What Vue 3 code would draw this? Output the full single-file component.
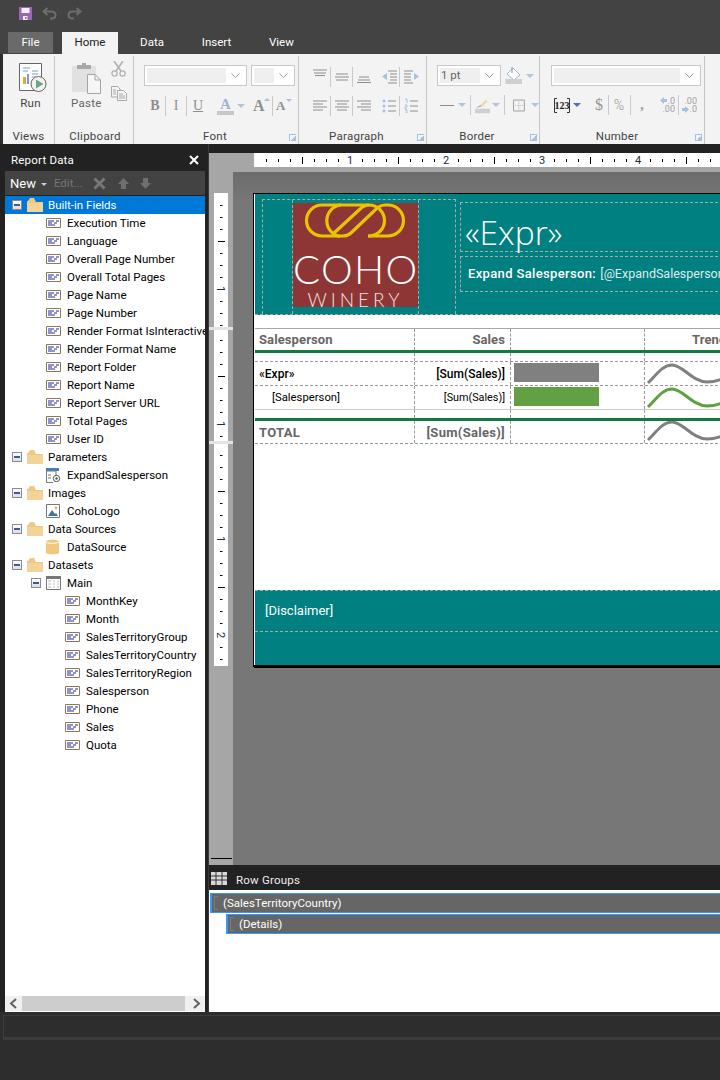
<script setup>
const tree = [
  { label: 'Built-in Fields', level: 0, icon: 'folder', selected: true },
  { label: 'Execution Time', level: 1, icon: 'field' },
  { label: 'Language', level: 1, icon: 'field' },
  { label: 'Overall Page Number', level: 1, icon: 'field' },
  { label: 'Overall Total Pages', level: 1, icon: 'field' },
  { label: 'Page Name', level: 1, icon: 'field' },
  { label: 'Page Number', level: 1, icon: 'field' },
  { label: 'Render Format IsInteractive', level: 1, icon: 'field' },
  { label: 'Render Format Name', level: 1, icon: 'field' },
  { label: 'Report Folder', level: 1, icon: 'field' },
  { label: 'Report Name', level: 1, icon: 'field' },
  { label: 'Report Server URL', level: 1, icon: 'field' },
  { label: 'Total Pages', level: 1, icon: 'field' },
  { label: 'User ID', level: 1, icon: 'field' },
  { label: 'Parameters', level: 0, icon: 'folder' },
  { label: 'ExpandSalesperson', level: 1, icon: 'param' },
  { label: 'Images', level: 0, icon: 'folder' },
  { label: 'CohoLogo', level: 1, icon: 'image' },
  { label: 'Data Sources', level: 0, icon: 'folder' },
  { label: 'DataSource', level: 1, icon: 'db' },
  { label: 'Datasets', level: 0, icon: 'folder' },
  { label: 'Main', level: 1, icon: 'table', expander: true },
  { label: 'MonthKey', level: 2, icon: 'field' },
  { label: 'Month', level: 2, icon: 'field' },
  { label: 'SalesTerritoryGroup', level: 2, icon: 'field' },
  { label: 'SalesTerritoryCountry', level: 2, icon: 'field' },
  { label: 'SalesTerritoryRegion', level: 2, icon: 'field' },
  { label: 'Salesperson', level: 2, icon: 'field' },
  { label: 'Phone', level: 2, icon: 'field' },
  { label: 'Sales', level: 2, icon: 'field' },
  { label: 'Quota', level: 2, icon: 'field' }
]

// horizontal ruler: a tick every 12px, 8 ticks to the inch
const hTicks = []
for (let i = 1; i < 40; i++) hTicks.push(i * 12)

// vertical ruler has one block per report section
const vSections = [
  { top: 0, count: 11 },
  { top: 135, count: 9 },
  { top: 250, count: 18 }
]
const vTicks = []
for (const s of vSections) {
  for (let i = 1; i <= s.count; i++) {
    vTicks.push({ y: s.top + i * 12, kind: i % 8 === 0 ? 'num' : i % 4 === 0 ? 'long' : 'short', n: i / 8 })
  }
}

const lines = (rows) => rows.map(([a, b, y]) => `M${a} ${y}H${b}`).join('')
const paraTop = [
  lines([[0, 14, 1], [1, 13, 4], [2, 12, 6.5]]),
  lines([[1, 13, 5], [0, 14, 8], [1, 13, 11]]),
  lines([[2, 12, 8], [1, 13, 11], [0, 14, 13.5]])
]
const paraBottom = [
  lines([[0, 14, 3], [0, 10, 6], [0, 14, 9], [0, 10, 12]]),
  lines([[0, 14, 3], [2, 12, 6], [0, 14, 9], [2, 12, 12]]),
  lines([[0, 14, 3], [4, 14, 6], [0, 14, 9], [4, 14, 12]])
]
const spark = 'M1 21C10 12 16 3 25 3C36 3 44 19 60 20C66 20 70 19 75 17'
</script>

<template>
  <div class="app">
    <div class="titlebar">
      <svg class="save" width="13" height="13" viewBox="0 0 13 13"><path d="M0 0H13V13H0Z" fill="#9a66b8"/><path d="M2.5 1H10.5V6H2.5Z" fill="#f4eef8"/><path d="M4 9H8.5V13H4Z" fill="#f4eef8"/><path d="M6 10H7.5V12H6Z" fill="#9a66b8"/></svg>
      <svg class="qat" width="15" height="13" viewBox="0 0 15 13"><path d="M5.5 1L1.5 4.5L5.5 8M2 4.5H9.5C12 4.5 13.5 6 13.5 8C13.5 10 12 11.5 9.5 11.5H8" fill="none" stroke="#6d6d6d" stroke-width="2"/></svg>
      <svg class="qat" width="15" height="13" viewBox="0 0 15 13"><path d="M9.5 1L13.5 4.5L9.5 8M13 4.5H5.5C3 4.5 1.5 6 1.5 8C1.5 10 3 11.5 5.5 11.5H7" fill="none" stroke="#6d6d6d" stroke-width="2"/></svg>
    </div>

    <div class="tabs">
      <a class="tab file">File</a>
      <a class="tab home">Home</a>
      <a class="tab data">Data</a>
      <a class="tab insert">Insert</a>
      <a class="tab view">View</a>
    </div>

    <div class="ribbon">
      <section class="group views">
        <div class="group-body big">
          <svg width="29" height="30" viewBox="0 0 29 30">
            <path d="M.5 .5H22.5V27.5H.5Z" fill="#fff" stroke="#666"/>
            <path d="M4 5H11M4 8H9M13 8H19M13 11H19M13 14H17" stroke="#7a9cc6" stroke-width="1" fill="none"/>
            <path d="M4 14H7V21H4Z" fill="#e0a93c"/><path d="M8 11H10V21H8Z" fill="#7a9cc6"/>
            <circle cx="19.5" cy="21" r="7.5" fill="#f3f3f3" stroke="#666"/>
            <path d="M17 16.5L24.5 21L17 25.5Z" fill="#6da387"/>
          </svg>
          <span class="big-label dark">Run</span>
        </div>
        <div class="group-label">Views</div>
      </section>

      <section class="group clipboard">
        <div class="group-body clip-row">
          <div class="big">
            <svg width="29" height="31" viewBox="0 0 29 31">
              <path d="M0 3H24V29H0Z" fill="#e1e1e1"/>
              <path d="M5 2H10V0H14V2H19V6H5Z" fill="#a8a8a8"/>
              <path d="M15.5 11.5H23L28.5 17V30.5H15.5Z" fill="#f6f6f6" stroke="#a4a4a4"/>
              <path d="M23 11.5V17H28.5" fill="none" stroke="#a4a4a4"/>
            </svg>
            <span class="big-label">Paste</span>
          </div>
          <div class="clip-small">
            <svg width="15" height="16" viewBox="0 0 15 16"><path d="M3 0L10 10M12 0L5 10" stroke="#b0b0b0" stroke-width="1.6" fill="none"/><circle cx="3.5" cy="12.5" r="2.6" fill="none" stroke="#b0b0b0" stroke-width="1.2"/><circle cx="11.5" cy="12.5" r="2.6" fill="none" stroke="#b0b0b0" stroke-width="1.2"/></svg>
            <svg width="16" height="15" viewBox="0 0 16 15"><path d="M.5 .5H6.5L9 3V11H.5Z" fill="#f4f4f4" stroke="#aaa"/><path d="M6.5 4.5H12.5L15.5 7.5V14.5H6.5Z" fill="#f4f4f4" stroke="#aaa"/><path d="M2 4H5M2 6H5M2 8H5M8 8H12M8 10H14M8 12H14" stroke="#aaa"/></svg>
          </div>
        </div>
        <div class="group-label">Clipboard</div>
      </section>

      <section class="group font">
        <div class="group-body">
          <div class="combo-row">
            <div class="combo w-font"><span class="combo-fill"></span><svg class="chev" width="9" height="5" viewBox="0 0 9 5"><path d="M.5 .5L4.5 4.5L8.5 .5" fill="none" stroke="#9a9a9a"/></svg></div>
            <div class="combo w-size"><span class="combo-fill"></span><svg class="chev" width="9" height="5" viewBox="0 0 9 5"><path d="M.5 .5L4.5 4.5L8.5 .5" fill="none" stroke="#9a9a9a"/></svg></div>
          </div>
          <div class="font-row">
            <b class="glyph bold">B</b><i class="sep"></i>
            <i class="glyph italic">I</i><i class="sep"></i>
            <u class="glyph under">U</u>
            <span class="color-a">A</span><i class="arrow"></i>
            <span class="grow-a">A<i class="up"></i></span><i class="sep"></i>
            <span class="shrink-a">A<i class="down"></i></span>
          </div>
        </div>
        <div class="group-label">Font</div>
        <i class="launcher"></i>
      </section>

      <section class="group paragraph">
        <div class="group-body para">
          <div class="para-row">
            <template v-for="(d, i) in paraTop" :key="d">
              <svg width="15" height="15" viewBox="0 0 15 15"><path :d="d" stroke="#8e8e8e" fill="none"/></svg>
              <i v-if="i < 2" class="sep"></i>
            </template>
            <svg class="after-align" width="15" height="15" viewBox="0 0 15 15"><path d="M6 2H15M8 5H15M8 8H15M8 11H15M6 14H15" stroke="#8e8e8e"/><path d="M5 4V11L0 7.5Z" fill="#a9bfe0"/></svg>
            <i class="sep"></i>
            <svg width="15" height="15" viewBox="0 0 15 15"><path d="M0 2H9M0 5H7M0 8H7M0 11H7M0 14H9" stroke="#8e8e8e"/><path d="M10 4V11L15 7.5Z" fill="#a9bfe0"/></svg>
          </div>
          <div class="para-row">
            <template v-for="(d, i) in paraBottom" :key="d">
              <svg width="15" height="15" viewBox="0 0 15 15"><path :d="d" stroke="#8e8e8e" fill="none"/></svg>
              <i v-if="i < 2" class="sep"></i>
            </template>
            <svg class="after-align" width="15" height="15" viewBox="0 0 15 15"><circle cx="2" cy="3" r="1.5" fill="#a9bfe0"/><circle cx="2" cy="8" r="1.5" fill="#a9bfe0"/><circle cx="2" cy="13" r="1.5" fill="#a9bfe0"/><path d="M6 3H14M6 8H14M6 13H14" stroke="#8e8e8e"/></svg>
            <i class="sep"></i>
            <svg width="15" height="15" viewBox="0 0 15 15"><path d="M1 1H3V5M1 7H3V9H1V11H3M1 12H3V15H1" stroke="#a9bfe0" fill="none"/><path d="M6 3H14M6 8H14M6 13H14" stroke="#8e8e8e"/></svg>
          </div>
        </div>
        <div class="group-label">Paragraph</div>
        <i class="launcher"></i>
      </section>

      <section class="group border">
        <div class="group-body">
          <div class="combo-row">
            <div class="combo w-pt"><span class="combo-fill pt">1 pt</span><svg class="chev" width="9" height="5" viewBox="0 0 9 5"><path d="M.5 .5L4.5 4.5L8.5 .5" fill="none" stroke="#9a9a9a"/></svg></div>
            <svg class="bucket" width="17" height="17" viewBox="0 0 17 17"><path d="M2 7L8 1L15 8L9 13Z" fill="#fff" stroke="#9fb6d8"/><path d="M7 0V6" stroke="#8e8e8e"/><path d="M.5 12H17V17H.5Z" fill="#cfcfcf"/></svg>
            <i class="arrow"></i>
          </div>
          <div class="border-row">
            <span class="line-sample"></span><i class="arrow"></i><i class="sep"></i>
            <svg class="pen" width="17" height="17" viewBox="0 0 17 17"><path d="M5 9L12 2L14 4L8 10Z" fill="#f0d9a0"/><path d="M1 11L6 8L7 10Z" fill="#8fb0dc"/><path d="M0 12H17V17H0Z" fill="#cfcfcf"/></svg>
            <i class="arrow"></i><i class="sep"></i>
            <svg class="box" width="13" height="13" viewBox="0 0 13 13"><path d="M.5 .5H12.5V12.5H.5Z" fill="none" stroke="#9a9a9a"/><path d="M6.5 2V11M2 6.5H11" stroke="#b8b8b8" stroke-dasharray="1 1"/></svg>
            <i class="arrow"></i>
          </div>
        </div>
        <div class="group-label">Border</div>
        <i class="launcher"></i>
      </section>

      <section class="group number">
        <div class="group-body">
          <div class="combo-row">
            <div class="combo w-num"><span class="combo-fill"></span><svg class="chev" width="9" height="5" viewBox="0 0 9 5"><path d="M.5 .5L4.5 4.5L8.5 .5" fill="none" stroke="#9a9a9a"/></svg></div>
          </div>
          <div class="num-row">
            <svg class="n123" width="16" height="15" viewBox="0 0 16 15"><path d="M3 .5H.5V14.5H3M13 .5H15.5V14.5H13" fill="none" stroke="#333"/><text x="8" y="11" text-anchor="middle" class="n123-text">123</text></svg>
            <i class="arrow blue"></i>
            <span class="glyph dollar">$</span><i class="sep"></i>
            <span class="glyph pct">%</span><i class="sep"></i>
            <span class="glyph comma">,</span>
            <svg class="dec d1" width="15" height="16" viewBox="0 0 15 16"><path d="M0 3.5L4 0V2H7V5H4V7Z" fill="#a9bfe0"/><text x="15" y="7" text-anchor="end" class="dec-text">.0</text><text x="15" y="15" text-anchor="end" class="dec-text">.00</text></svg>
            <i class="sep"></i>
            <svg class="dec d2" width="15" height="16" viewBox="0 0 15 16"><path d="M7 12.5L3 9V11H0V14H3V16Z" fill="#a9bfe0"/><text x="15" y="7" text-anchor="end" class="dec-text">.00</text><text x="15" y="15" text-anchor="end" class="dec-text">.0</text></svg>
          </div>
        </div>
        <div class="group-label">Number</div>
        <i class="launcher"></i>
      </section>
    </div>

    <div class="body">
      <aside class="panel">
        <div class="panel-head"><span>Report Data</span>
          <svg width="10" height="10" viewBox="0 0 10 10"><path d="M1 1L9 9M9 1L1 9" stroke="#fff" stroke-width="2"/></svg>
        </div>
        <div class="panel-tools">
          <span class="new">New</span><i class="new-arrow"></i>
          <span class="edit">Edit...</span>
          <svg width="13" height="13" viewBox="0 0 13 13"><path d="M1.5 1.5L11.5 11.5M11.5 1.5L1.5 11.5" stroke="#777" stroke-width="3"/></svg>
          <svg width="11" height="11" viewBox="0 0 11 11"><path d="M5.5 0L11 6H8V11H3V6H0Z" fill="#6f6f6f"/></svg>
          <svg width="11" height="11" viewBox="0 0 11 11"><path d="M5.5 11L11 5H8V0H3V5H0Z" fill="#6f6f6f"/></svg>
        </div>
        <div class="tree">
          <div v-for="node in tree" :key="node.label" class="node" :class="['lv' + node.level, { selected: node.selected }]">
            <span v-if="node.level === 0 || node.expander" class="expander"><i></i></span>
            <svg v-if="node.icon === 'folder'" class="ico" width="16" height="14" viewBox="0 0 16 14"><path d="M0 3V14H16V4H9L7 0H3L1 3Z" fill="#efc983"/><path d="M0 5H16V14H0Z" fill="#f3d397"/></svg>
            <svg v-else-if="node.icon === 'field'" class="ico" width="15" height="10" viewBox="0 0 15 10"><path d="M.5 .5H14.5V9.5H.5Z" fill="#fff" stroke="#8a7a5c"/><path d="M2 3H8M10 3H13M2 5H6M8 5H11M2 7H9" stroke="#24249a"/></svg>
            <svg v-else-if="node.icon === 'param'" class="ico" width="15" height="15" viewBox="0 0 15 15"><path d="M.5 3H10V8M.5 3V14.5H7" fill="#fff" stroke="#777"/><path d="M0 0H13V3H0Z" fill="#4d7fb5"/><path d="M2 7H5M2 10H5" stroke="#777"/><circle cx="10.5" cy="10.5" r="3.2" fill="none" stroke="#555"/><circle cx="10.5" cy="10.5" r="1.2" fill="#555"/></svg>
            <svg v-else-if="node.icon === 'image'" class="ico" width="14" height="14" viewBox="0 0 14 14"><path d="M.5 .5H13.5V13.5H.5Z" fill="#fff" stroke="#777"/><path d="M2 12L6 6L9 10L10 9L12 12Z" fill="#3f73ad"/><circle cx="10" cy="4" r="1.4" fill="#e9b45a"/></svg>
            <svg v-else-if="node.icon === 'db'" class="ico" width="13" height="16" viewBox="0 0 13 16"><path d="M0 2.5C0 0 13 0 13 2.5V13.5C13 16 0 16 0 13.5Z" fill="#f0c97c"/><path d="M0 2.5C0 5 13 5 13 2.5" fill="none" stroke="#fff"/></svg>
            <svg v-else class="ico" width="15" height="14" viewBox="0 0 15 14"><path d="M.5 .5H14.5V13.5H.5Z" fill="#fff" stroke="#777"/><path d="M0 0H15V3H0Z" fill="#777"/><path d="M2 5H5M7 5H9M11 5H13M2 8H5M7 8H9M11 8H13M2 11H5M7 11H9M11 11H13" stroke="#bbb"/></svg>
            <span class="node-text">{{ node.label }}</span>
          </div>
        </div>
        <div class="hscroll">
          <svg width="17" height="15" viewBox="0 0 17 15"><path d="M11 3L6 7.5L11 12" fill="none" stroke="#606060" stroke-width="2"/></svg>
          <div class="thumb"></div>
          <svg width="20" height="15" viewBox="0 0 20 15"><path d="M9 3L14 7.5L9 12" fill="none" stroke="#606060" stroke-width="2"/></svg>
        </div>
      </aside>

      <main class="designer">
        <div class="hruler-row">
          <svg class="hruler" width="466" height="14" viewBox="0 0 466 14">
            <template v-for="x in hTicks" :key="x">
              <text v-if="x % 96 === 0" :x="x" y="11" text-anchor="middle" class="ruler-num">{{ x / 96 }}</text>
              <path v-else-if="x % 48 === 0" :d="`M${x + .5} 4V11`" stroke="#000"/>
              <path v-else :d="`M${x + .5} 6V9`" stroke="#000"/>
            </template>
          </svg>
        </div>
        <div class="design-body">
          <div class="vruler-col">
            <svg class="vruler" width="24" height="473" viewBox="0 0 24 473">
              <rect x="5" y="0" width="14" height="473" fill="#fff"/>
              <rect x="0" y="134" width="24" height="3" fill="#e4e4e4"/>
              <rect x="0" y="248" width="24" height="3" fill="#e4e4e4"/>
              <template v-for="t in vTicks" :key="t.y">
                <text v-if="t.kind === 'num'" class="ruler-num" text-anchor="middle" :transform="`translate(8 ${t.y}) rotate(90)`">{{ t.n }}</text>
                <path v-else-if="t.kind === 'long'" :d="`M9 ${t.y + .5}H16`" stroke="#000"/>
                <path v-else :d="`M11 ${t.y + .5}H13.5`" stroke="#000"/>
              </template>
            </svg>
            <i class="corner-line"></i>
          </div>
          <div class="canvas">
            <div class="page">
              <header class="rpt-header">
                <div class="logo-box">
                  <div class="logo-col">
                    <div class="logo">
                      <svg width="126" height="36" viewBox="0 0 126 36">
                        <g fill="none" stroke="#e9c400" stroke-width="3.2">
                          <path d="M48 2H29A15.5 15.5 0 0 0 29 33H50C54 33 57 31 59 29L80 9C83 6 86 2 92 2H95A15.5 15.5 0 0 1 95 33H75"/>
                          <path d="M47 33.5A16 16 0 0 1 47 2H76A15.5 15.5 0 0 1 76 33H75"/>
                          <path d="M41 30L66 7C69 4 72 2 76 2"/>
                        </g>
                      </svg>
                      <div class="coho">COHO</div>
                      <div class="winery">WINERY</div>
                    </div>
                  </div>
                </div>
                <div class="title-col">
                  <div class="expr-box">«Expr»</div>
                  <div class="expand-box"><b>Expand Salesperson:</b> <span>[@ExpandSalesperson]</span></div>
                </div>
              </header>

              <div class="tbl">
                <div class="tr head">
                  <div class="td">Salesperson</div><div class="td right">Sales</div><div class="td"></div><div class="td trend">Trend</div>
                </div>
                <div class="tr gap"><div class="td"></div><div class="td"></div><div class="td"></div><div class="td"></div></div>
                <div class="tr group-row">
                  <div class="td strong-black">«Expr»</div><div class="td right strong-black">[Sum(Sales)]</div>
                  <div class="td"><span class="bar grey"></span></div>
                  <div class="td"><svg width="75" height="24" viewBox="0 0 75 24"><path :d="spark" fill="none" stroke="#808080" stroke-width="3"/></svg></div>
                </div>
                <div class="tr detail">
                  <div class="td indent">[Salesperson]</div><div class="td right">[Sum(Sales)]</div>
                  <div class="td"><span class="bar green"></span></div>
                  <div class="td"><svg width="75" height="24" viewBox="0 0 75 24"><path :d="spark" fill="none" stroke="#5f9f3f" stroke-width="3"/></svg></div>
                </div>
                <div class="tr gap2"><div class="td"></div><div class="td"></div><div class="td"></div><div class="td"></div></div>
                <div class="tr total">
                  <div class="td">TOTAL</div><div class="td right">[Sum(Sales)]</div><div class="td"></div>
                  <div class="td"><svg width="75" height="24" viewBox="0 0 75 24"><path :d="spark" fill="none" stroke="#808080" stroke-width="3"/></svg></div>
                </div>
              </div>

              <footer class="rpt-footer">
                <div class="disclaimer">[Disclaimer]</div>
              </footer>
            </div>
          </div>
        </div>

        <div class="groups-head">
          <svg width="16" height="13" viewBox="0 0 16 13"><path d="M0 0H16V13H0Z" fill="#d8d8d8"/><path d="M0 4H16M0 8H16M5 0V13M11 0V13" stroke="#333"/></svg>
          <span>Row Groups</span>
        </div>
        <div class="groups">
          <div class="grp lvl0"><i></i>(SalesTerritoryCountry)</div>
          <div class="grp lvl1"><i></i>(Details)</div>
        </div>
      </main>
    </div>

    <div class="statusbar"></div>
    <div class="bottom"></div>
  </div>
</template>

<style scoped>
.app { width: 720px; height: 1080px; overflow: hidden; background: #2d2d2d; font-family: Roboto, sans-serif; font-size: 11.5px; color: #000; display: flex; flex-direction: column }
i { font-style: normal }

.titlebar { height: 31px; background: #434343; display: flex; align-items: center; padding-left: 19px; gap: 10px; box-sizing: border-box; padding-bottom: 4px }
.tabs { height: 23px; background: #434343; display: flex; color: #fff }
.tab { display: block; line-height: 21px; text-align: center; box-sizing: border-box }
.tab.file { width: 45px; height: 21px; margin: 1px 0 0 8px; background: #6a6a6a }
.tab.home { width: 56px; height: 22px; margin: 1px 0 0 9px; background: #f3f3f3; color: #222 }
.tab.data { margin: 1px 0 0 22px; width: 24px }
.tab.insert { margin: 1px 0 0 37px; width: 31px }
.tab.view { margin: 1px 0 0 37px; width: 23px }

.ribbon { height: 90px; margin-left: 3px; background: #f3f3f3; display: flex; flex: none }
.group { position: relative; box-sizing: border-box; display: flex; flex-direction: column; margin-top: 2px; border-right: 1px solid #c6c6c6; flex: none }
.group-body { flex: 1; min-height: 0 }
.group-label { height: 16px; text-align: center; color: #444; line-height: 16px; box-sizing: border-box; letter-spacing: .25px }
.views { width: 52px }
.clipboard { width: 79px }
.font { width: 165px }
.paragraph { width: 128px }
.border { width: 113px }
.number { width: 165px }
.clipboard .group-label { padding-left: 2px }
.font .group-label { padding-right: 2px }
.paragraph .group-label { padding-right: 12px }
.border .group-label { padding-right: 12px }
.number .group-label { padding-right: 10px }
.big { display: flex; flex-direction: column; align-items: center; padding-top: 7px }
.big-label { margin-top: 1px; color: #666; line-height: 16px; letter-spacing: .3px }
.big-label.dark { color: #444; margin-top: 2px }
.views .big { padding-left: 4px }
.views .big svg { margin-left: 5px }
.clip-row { display: flex; padding-left: 16px; gap: 9px }
.clip-row .big { padding-top: 7px }
.clip-small { display: flex; flex-direction: column; gap: 9px; padding-top: 5px }

.combo-row { display: flex; align-items: center; gap: 4px; padding: 9px 0 0 10px }
.combo { height: 21px; box-sizing: border-box; border: 1px solid #c9c9c9; background: #fff; display: flex; align-items: center; padding: 2px; justify-content: space-between }
.combo-fill { display: block; height: 100%; flex: 1; background: #efefef; margin-right: 5px; color: #666; line-height: 15px }
.combo-fill.pt { padding-left: 1px }
.chev { margin: 0 4px 0 0; flex: none }
.w-font { width: 103px }
.w-size { width: 44px }
.w-pt { width: 64px }
.w-num { width: 150px }
.number .combo-row { padding-left: 11px }
.sep { display: block; width: 1px; height: 20px; background: #c9c9c9; flex: none }
.arrow { display: block; width: 0; height: 0; border-left: 4px solid transparent; border-right: 4px solid transparent; border-top: 4px solid #b3c4de; flex: none }
.arrow.blue { border-top-color: #4a73b0 }

.font-row { display: flex; align-items: center; height: 20px; margin-top: 10px; padding-left: 14px; font-family: "Liberation Serif", serif; color: #8e8e8e; font-size: 14px }
.glyph { display: block; width: 14px; text-align: center; text-decoration: none }
.bold { font-weight: 700; margin-right: 3px }
.italic { margin: 0 3px }
.under { text-decoration: underline; margin-left: 4px }
.color-a { margin-left: 12px; width: 17px; text-align: center; border-bottom: 4px solid #c8c8c8; font-weight: 700; color: #9fb3d4; font-size: 15px; line-height: 14px; margin-right: 3px }
.grow-a { margin-left: 8px; margin-right: 2px; font-size: 16px; font-weight: 700; position: relative; width: 17px }
.shrink-a { margin-left: 3px; font-size: 13px; font-weight: 700; position: relative; width: 16px }
.up, .down { position: absolute; right: 0; top: 1px; width: 0; height: 0; border-left: 3px solid transparent; border-right: 3px solid transparent }
.up { border-bottom: 3px solid #a9bfe0 }
.down { border-top: 3px solid #a9bfe0 }

.launcher { position: absolute; right: 2px; bottom: 3px; width: 7px; height: 7px; border-top: 1px solid #a9bfe0; border-left: 1px solid #a9bfe0; box-sizing: border-box; background: linear-gradient(135deg, transparent 50%, #a9bfe0 50%) }

.para { padding: 13px 0 0 14px }
.para-row { display: flex; align-items: center; margin-bottom: 14px; height: 15px }
.para-row svg { flex: none }
.para-row .sep { margin: 0 4px 0 2px }
.para-row .after-align { margin-left: 10px }

.border-row { display: flex; align-items: center; height: 20px; margin-top: 9px; padding-left: 13px }
.line-sample { display: block; width: 15px; height: 1px; background: #8c8c8c; margin-right: 4px }
.border-row .sep { margin: 0 4px }
.border-row .pen { margin-right: 2px }
.border-row .box { margin: 0 6px 0 4px }

.num-row { display: flex; align-items: center; height: 20px; margin-top: 9px; padding-left: 14px; color: #959595 }
.n123 { margin-right: 3px; flex: none }
.n123-text { font: 700 10px "Liberation Serif", serif; fill: #222 }
.dollar { font: 16px "Liberation Serif", serif; margin: 0 2px 0 11px }
.pct { font-size: 14px; margin: 0 4px 0 3px; font-weight: 300 }
.comma { font: 700 14px "Liberation Serif", serif; margin: 0 0 0 7px; width: 8px }
.dec { display: block; flex: none }
.d1 { margin: 0 3px 0 14px }
.d2 { margin-left: 3px }
.dec-text { font: 9px Roboto, sans-serif; fill: #a0a0a0 }

.body { height: 868px; flex: none; display: flex; margin-bottom: 3px; background: #222 }
.panel { width: 200px; margin: 0 3px 0 5px; display: flex; flex-direction: column; flex: none }
.panel-head { height: 27px; flex: none; display: flex; align-items: center; justify-content: space-between; color: #fff; padding: 4px 6px 0 6px; box-sizing: border-box; letter-spacing: .2px }
.panel-tools { height: 25px; flex: none; background: #434343; display: flex; align-items: center; padding-left: 5px; color: #fff; border-bottom: 1px solid #222; box-sizing: border-box }
.new { font-size: 13px }
.new-arrow { width: 0; height: 0; border-left: 3px solid transparent; border-right: 3px solid transparent; border-top: 3px solid #ccc; margin: 2px 7px 0 5px }
.edit { color: #757575; width: 39px }
.panel-tools svg { margin-right: 11px }
.panel-tools svg:first-of-type { margin-right: 12px }
.tree { flex: 1; min-height: 0; background: #fff; overflow: hidden }
.node { height: 18px; display: flex; align-items: center; white-space: nowrap; position: relative; box-sizing: border-box }
.node.selected { background: #0078d7; color: #fff }
.lv0 { padding-left: 7px }
.lv1 { padding-left: 41px }
.lv2 { padding-left: 60px }
.expander { display: block; width: 10px; height: 10px; box-sizing: border-box; border: 1px solid #8c8c8c; background: linear-gradient(#fff, #ddd); margin-right: 5px; flex: none; position: relative }
.expander i { position: absolute; left: 1px; right: 1px; top: 3px; height: 2px; background: #3a5a9a }
.lv1 .expander { margin-left: -15px; margin-right: 5px }
.ico { flex: none }
.lv0 .node-text { margin-left: 5px }
.lv1 .node-text, .lv2 .node-text { position: absolute }
.lv1 .node-text { left: 62px }
.lv2 .node-text { left: 81px }
.hscroll { height: 16px; flex: none; background: #f0f0f0; display: flex; align-items: center; border-bottom: 1px solid #fff; box-sizing: border-box }
.thumb { flex: 1; height: 15px; background: #cdcdcd }

.designer { flex: 1; min-width: 0; display: flex; flex-direction: column; padding-top: 9px; border-left: 1px solid #3a3a3a; box-sizing: border-box }
.hruler-row { height: 19px; flex: none; background: #a6a6a6; padding-left: 45px }
.hruler { display: block; background: #fff }
.ruler-num { font: 11px Roboto, sans-serif; fill: #1a2a44 }
.design-body { height: 693px; flex: none; display: flex }
.vruler-col { width: 24px; flex: none; background: #a6a6a6; padding-top: 21px; box-sizing: border-box; display: flex; flex-direction: column }
.vruler { display: block; flex: none }
.corner-line { display: block; height: 1px; width: 21px; margin: 192px 0 0 2px; background: #000 }
.canvas { flex: 1; min-width: 0; overflow: hidden; background: linear-gradient(#6c6c6c, #777 30px); padding: 21px 0 0 20px }
.page { width: 600px; height: 474px; box-sizing: border-box; background: #fff; border: 1px solid #000; border-width: 1px 0 2px 1px; padding: 0 0 0 1px; box-shadow: 1px 1px 0 #000; display: flex; flex-direction: column }

.rpt-header { height: 121px; flex: none; background: #008080; display: flex; color: #fff; border-bottom: 1px dashed #aaa; box-sizing: border-box; padding: 5px 0 0 7px; gap: 4px }
.logo-box { width: 194px; border: 1px dashed #aaa; border-bottom: 0; box-sizing: border-box; padding-left: 29px; flex: none }
.logo-col { width: 127px; height: 100%; border: 1px dashed #aaa; border-width: 0 1px; box-sizing: border-box; padding-top: 3px }
.logo { width: 125px; height: 104px; background: #8e3636; overflow: hidden; text-align: center }
.logo svg { display: block }
.coho { font: 300 40px/34px Lato, sans-serif; letter-spacing: 1.4px; margin-top: 13px; white-space: nowrap }
.winery { font: 300 19px/20px Lato, sans-serif; letter-spacing: 4px; margin-top: 4px; color: #f0e0e0 }
.title-col { flex: 1; padding-top: 3px }
.expr-box { height: 50px; box-sizing: border-box; border: 1px dashed #aaa; font: 300 33.5px/58px "Open Sans", sans-serif; padding-left: 4px; white-space: nowrap }
.expand-box { height: 36px; margin-top: 4px; box-sizing: border-box; border: 1px dashed #aaa; padding-left: 7px; line-height: 33px; font-size: 13px; white-space: nowrap }
.expand-box b { font-weight: 500; letter-spacing: .35px }
.expand-box span { opacity: .85; font-size: 12.5px; margin-left: 1px }

.tbl { margin-top: 13px; flex: none }
.tr { display: grid; grid-template-columns: 160px 96px 134px 1fr; border-bottom: 1px dashed #999; box-sizing: border-box }
.td { border-right: 1px dashed #999; box-sizing: border-box; padding: 0 5px 0 4px; display: flex; align-items: center; white-space: nowrap; overflow: hidden }
.td.right { justify-content: flex-end }
.td.trend { padding-left: 47px }
.td svg { flex: none; margin-left: -2px }
.head { height: 25px; border-top: 1px solid #a8a8a8; font-weight: 700; font-size: 13px; color: #666; border-bottom: 3px solid #137a43; letter-spacing: .1px }
.gap { height: 9px }
.group-row { height: 24px; font-size: 12px }
.strong-black { font-weight: 500 }
.detail { height: 24px; font-size: 11.3px; border-bottom: 1px solid #ccc }
.detail .right { font-size: 10.8px }
.indent { padding-left: 17px }
.bar { display: block; width: 85px; height: 19px; margin: 0 0 2px -1px }
.bar.grey { background: #808080 }
.bar.green { background: #62a043 }
.gap2 { height: 11px; border-bottom: 3px solid #137a43 }
.total { height: 23px; font-weight: 700; font-size: 13px; color: #666; letter-spacing: .3px }
.total svg { margin-top: -3px }

.rpt-footer { margin-top: 146px; flex: 1; background: #008080; color: #fff }
.disclaimer { height: 42px; border: 1px dashed #aaa; border-width: 1px 0; box-sizing: border-box; padding-left: 10px; line-height: 40px; font-size: 13px }

.groups-head { height: 26px; flex: none; background: #222; color: #eee; display: flex; align-items: center; padding-left: 2px; gap: 9px; letter-spacing: .2px }
.groups-head span { margin-top: 4px }
.groups { flex: 1; min-height: 0; background: #fff; padding-top: 2px; margin-top: -1px; border-top: 1px solid #fff; overflow: hidden }
.grp { height: 20px; box-sizing: border-box; background: #666; border: 1px solid #3399ff; border-width: 1px 0 1px 2px; color: #fff; display: flex; align-items: center; white-space: nowrap }
.grp i { display: block; width: 3px; height: 12px; margin: 0 5px 0 2px; border: 1px solid #7c7c7c; border-right: 0 }
.lvl0 { margin-left: 1px }
.lvl1 { margin: 1px 0 0 17px }

.statusbar { height: 21px; flex: none; margin-left: 3px; background: #2d2d2d; border-bottom: 3px solid #3c3c3c; border-top: 1px solid #3c3c3c; border-left: 1px solid #3c3c3c }
.bottom { flex: 1; background: #2d2d2d }
</style>
